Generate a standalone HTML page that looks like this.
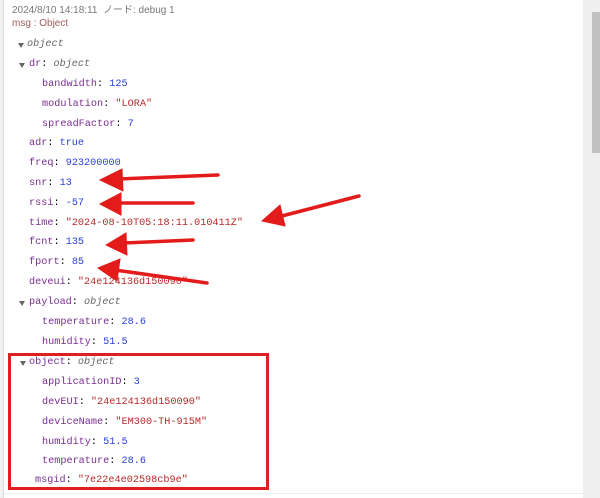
<!DOCTYPE html>
<html><head><meta charset="utf-8"><style>
body{margin:0;width:600px;height:498px;overflow:hidden;background:#fff;position:relative;font-family:"Liberation Mono",monospace;font-size:10.2px}
.r{position:absolute;white-space:pre;line-height:14px}
.k{color:#792e90}.n{color:#2a3fd6}.s{color:#b52a2a}.t{color:#666;font-style:italic}
.tri{position:absolute;width:0;height:0;border-left:3.5px solid transparent;border-right:3.5px solid transparent;border-top:5px solid #666}
.h{position:absolute;font-family:"Liberation Sans","Noto Sans CJK JP",sans-serif;font-size:10px;white-space:pre}
</style></head><body>
<div style="position:absolute;left:0;top:0;width:3px;height:498px;background:#f2f2f2"></div>
<div style="position:absolute;left:3px;top:0;width:1px;height:498px;background:#dcdcdc"></div>
<div style="position:absolute;left:583px;top:0;width:17px;height:498px;background:#efefef"></div>
<div style="position:absolute;left:592px;top:12px;width:8px;height:141px;background:#c1c1c1"></div>
<div style="position:absolute;left:4px;top:493px;width:579px;height:1px;background:#eee"></div>
<div class="h" style="left:12px;top:1px;color:#777">2024/8/10 14:18:11  ノード: debug 1</div>
<div class="h" style="left:12px;top:18px;color:#a05a5a">msg : Object</div>

<div class="tri" style="left:18px;top:43px"></div><div class="r" style="left:27px;top:38px"><span class="t">object</span></div>
<div class="tri" style="left:19px;top:63px"></div><div class="r" style="left:29px;top:58px"><span class="k">dr</span>: <span class="t">object</span></div>
<div class="r" style="left:42px;top:78px"><span class="k">bandwidth</span>: <span class="n">125</span></div>
<div class="r" style="left:42px;top:98px"><span class="k">modulation</span>: <span class="s">"LORA"</span></div>
<div class="r" style="left:42px;top:118px"><span class="k">spreadFactor</span>: <span class="n">7</span></div>
<div class="r" style="left:29px;top:137px"><span class="k">adr</span>: <span class="n">true</span></div>
<div class="r" style="left:29px;top:157px"><span class="k">freq</span>: <span class="n">923200000</span></div>
<div class="r" style="left:29px;top:177px"><span class="k">snr</span>: <span class="n">13</span></div>
<div class="r" style="left:29px;top:197px"><span class="k">rssi</span>: <span class="n">-57</span></div>
<div class="r" style="left:29px;top:217px"><span class="k">time</span>: <span class="s">"2024-08-10T05:18:11.010411Z"</span></div>
<div class="r" style="left:29px;top:236px"><span class="k">fcnt</span>: <span class="n">135</span></div>
<div class="r" style="left:29px;top:256px"><span class="k">fport</span>: <span class="n">85</span></div>
<div class="r" style="left:29px;top:276px"><span class="k">deveui</span>: <span class="s">"24e124136d150090"</span></div>
<div class="tri" style="left:19px;top:301px"></div><div class="r" style="left:29px;top:296px"><span class="k">payload</span>: <span class="t">object</span></div>
<div class="r" style="left:42px;top:316px"><span class="k">temperature</span>: <span class="n">28.6</span></div>
<div class="r" style="left:42px;top:336px"><span class="k">humidity</span>: <span class="n">51.5</span></div>
<div class="tri" style="left:20px;top:361px"></div><div class="r" style="left:29px;top:356px"><span class="k">object</span>: <span class="t">object</span></div>
<div class="r" style="left:42px;top:376px"><span class="k">applicationID</span>: <span class="n">3</span></div>
<div class="r" style="left:42px;top:396px"><span class="k">devEUI</span>: <span class="s">"24e124136d150090"</span></div>
<div class="r" style="left:42px;top:416px"><span class="k">deviceName</span>: <span class="s">"EM300-TH-915M"</span></div>
<div class="r" style="left:42px;top:436px"><span class="k">humidity</span>: <span class="n">51.5</span></div>
<div class="r" style="left:42px;top:455px"><span class="k">temperature</span>: <span class="n">28.6</span></div>
<div class="r" style="left:35px;top:474px"><span class="k">msgid</span>: <span class="s">"7e22e4e02598cb9e"</span></div>

<div style="position:absolute;left:8px;top:353px;width:255px;height:131px;border:3px solid #e02020"></div>

<svg width="600" height="498" style="position:absolute;left:0;top:0" xmlns="http://www.w3.org/2000/svg">
<g stroke="#e31b1b" stroke-width="3.5" fill="#e31b1b" stroke-linecap="round">
<line x1="218" y1="175" x2="118" y2="179"/><polygon points="100,180 122,169 123,191" stroke-width="1"/>
<line x1="193" y1="203" x2="118" y2="203"/><polygon points="100,204 121,193 121,215" stroke-width="1"/>
<line x1="359" y1="196" x2="278" y2="217"/><polygon points="262,221 280,205 285,226" stroke-width="1"/>
<line x1="193" y1="240" x2="123" y2="243"/><polygon points="106,245 126,233 127,255" stroke-width="1"/>
<line x1="207" y1="283" x2="115" y2="270"/><polygon points="98,268 120,259 117,281" stroke-width="1"/>
</g></svg>
</body></html>
